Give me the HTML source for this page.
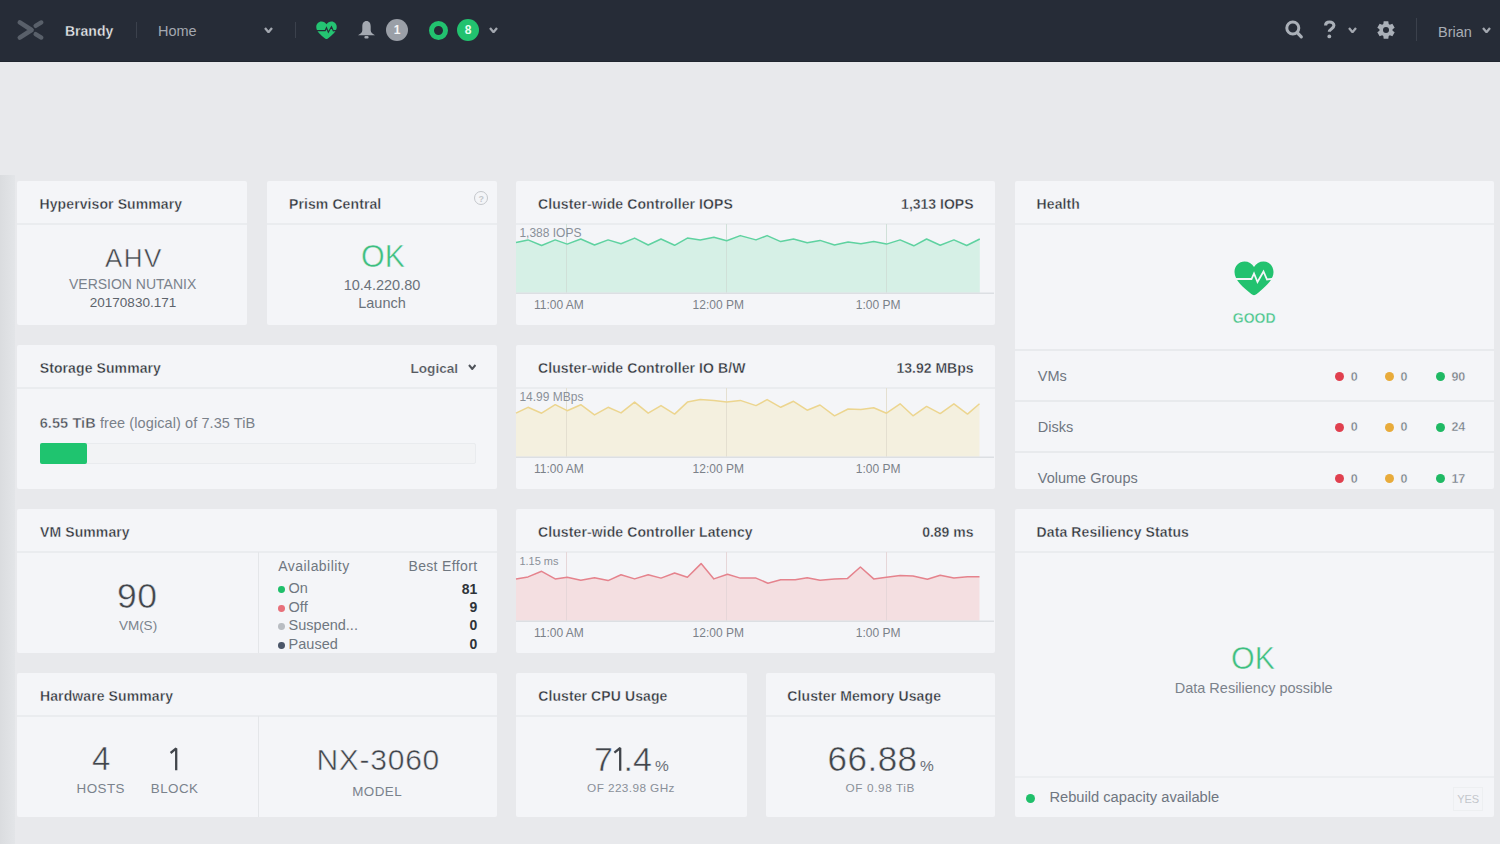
<!DOCTYPE html>
<html><head><meta charset="utf-8"><title>Prism Dashboard</title>
<style>
html,body{margin:0;padding:0;width:1500px;height:844px;overflow:hidden;background:#e8e9ec;}
body{position:relative;font-family:"Liberation Sans",sans-serif;}
.t{position:absolute;white-space:nowrap;}
.r{position:absolute;}
</style></head><body>
<div id="root" style="position:absolute;left:0;top:0;width:1500px;height:844px">
<div class="r" style="left:0px;top:0px;width:1500px;height:62px;background:#262c37;"></div>
<div class="r" style="left:0px;top:61px;width:1500px;height:1px;background:#20252e;"></div>
<svg class="r" style="left:0;top:0" width="60" height="60" viewBox="0 0 60 60">
<path d="M19.8 22.4 L31.6 30 L19.8 37.6" fill="none" stroke="#59606a" stroke-width="4.6" stroke-linecap="round" stroke-linejoin="round"/>
<path d="M41.3 22.4 L35.6 25.9" fill="none" stroke="#59606a" stroke-width="4.3" stroke-linecap="round"/>
<path d="M35.6 34.1 L41.3 37.6" fill="none" stroke="#59606a" stroke-width="4.3" stroke-linecap="round"/>
</svg>
<div class="t" style="left:65.0px;top:24.1px;font-size:14px;line-height:14px;color:#e9eaec;font-weight:700;letter-spacing:0px;-webkit-text-stroke:0.3px #262c37;">Brandy</div>
<div class="r" style="left:136px;top:22px;width:1px;height:16px;background:#3b414c;"></div>
<div class="t" style="left:158.0px;top:23.7px;font-size:14.5px;line-height:14.5px;color:#a3a8b0;font-weight:400;letter-spacing:0px;">Home</div>
<svg class="r" style="left:264px;top:27px" width="9" height="6.2" viewBox="0 0 9 6.2"><path d="M1 1 L4.5 5.2 L8 1" fill="none" stroke="#a3a8b0" stroke-width="2.3"/></svg>
<div class="r" style="left:295px;top:22px;width:1px;height:16px;background:#3b414c;"></div>
<svg class="r" style="left:316.3px;top:20.5px" width="21" height="18.7" viewBox="0 0 40 35">
<path d="M20 6 C18 2.5 14.5 0.5 10.5 0.5 C5 0.5 0.5 5 0.5 11 C0.5 19.5 9.5 26.5 17.3 33.1 C19 34.5 21 34.5 22.7 33.1 C30.5 26.5 39.5 19.5 39.5 11 C39.5 5 35 0.5 29.5 0.5 C25.5 0.5 22 2.5 20 6 Z" fill="#24c472"/>
<path d="M0 18 L17.5 18 L20 12.5 L23.5 21 L29.5 10.5 L33 18.5 L40 17.5" fill="none" stroke="#262c37" stroke-width="2.2" stroke-linejoin="miter"/>
</svg>
<svg class="r" style="left:357px;top:20px" width="19" height="20" viewBox="0 0 19 20">
<path d="M9.5 1 C6.8 1 5.3 3.2 5.3 6.6 L5.3 10.4 C5.3 12.4 3 13.9 1 15.3 L18 15.3 C16 13.9 13.7 12.4 13.7 10.4 L13.7 6.6 C13.7 3.2 12.2 1 9.5 1 Z" fill="#a3a8b0"/>
<rect x="7.4" y="16.1" width="4.2" height="2.4" rx="1.1" fill="#a3a8b0"/>
</svg>
<div class="r" style="left:386px;top:19px;width:22px;height:22px;border-radius:50%;background:#9a9fa7"></div>
<div class="t" style="left:97.0px;width:600px;text-align:center;top:24.3px;font-size:12px;line-height:12px;color:#f4f4f4;font-weight:700;letter-spacing:0px;">1</div>
<div class="r" style="left:428.5px;top:20.5px;width:19px;height:19px;border-radius:50%;box-sizing:border-box;border:5px solid #22c26f"></div>
<div class="r" style="left:457px;top:19px;width:22px;height:22px;border-radius:50%;background:#22c26f"></div>
<div class="t" style="left:168.0px;width:600px;text-align:center;top:24.3px;font-size:12px;line-height:12px;color:#eafff2;font-weight:700;letter-spacing:0px;">8</div>
<svg class="r" style="left:488.5px;top:27px" width="9" height="6.2" viewBox="0 0 9 6.2"><path d="M1 1 L4.5 5.2 L8 1" fill="none" stroke="#a3a8b0" stroke-width="2.3"/></svg>
<svg class="r" style="left:1284px;top:20px" width="20" height="20" viewBox="0 0 20 20">
<circle cx="8.8" cy="8" r="6" fill="none" stroke="#aab0b8" stroke-width="3"/>
<path d="M13.2 12.6 L17.3 16.8" stroke="#aab0b8" stroke-width="3.2" stroke-linecap="round"/>
</svg>
<svg class="r" style="left:1322px;top:20px" width="16" height="20" viewBox="0 0 16 20">
<path d="M3.6 5.4 C3.6 2.8 5.5 2 7.5 2 C10 2 11.9 3.3 11.9 5.6 C11.9 8.5 7.3 8.8 7.3 11.8" fill="none" stroke="#aab0b8" stroke-width="3.1"/>
<circle cx="7.3" cy="16.4" r="1.9" fill="#aab0b8"/>
</svg>
<svg class="r" style="left:1347.5px;top:27px" width="9" height="6.2" viewBox="0 0 9 6.2"><path d="M1 1 L4.5 5.2 L8 1" fill="none" stroke="#a3a8b0" stroke-width="2.3"/></svg>
<svg class="r" style="left:1376px;top:19.5px" width="20" height="20" viewBox="0 0 20 20"><path d="M7.69 1.30 L12.31 1.30 L12.69 3.97 L13.87 4.66 L16.38 3.65 L18.69 7.65 L16.56 9.32 L16.56 10.68 L18.69 12.35 L16.38 16.35 L13.87 15.34 L12.69 16.03 L12.31 18.70 L7.69 18.70 L7.31 16.03 L6.13 15.34 L3.62 16.35 L1.31 12.35 L3.44 10.68 L3.44 9.32 L1.31 7.65 L3.62 3.65 L6.13 4.66 L7.31 3.97 Z" fill="#aab0b8"/><circle cx="10" cy="10" r="3" fill="#262c37"/></svg>
<div class="r" style="left:1416px;top:18px;width:1px;height:23px;background:#3b414c;"></div>
<div class="t" style="left:1438.0px;top:24.7px;font-size:14.5px;line-height:14.5px;color:#a9aeb5;font-weight:400;letter-spacing:0px;">Brian</div>
<svg class="r" style="left:1481.5px;top:27px" width="9" height="6.2" viewBox="0 0 9 6.2"><path d="M1 1 L4.5 5.2 L8 1" fill="none" stroke="#a3a8b0" stroke-width="2.3"/></svg>
<div class="r" style="left:0px;top:62px;width:1500px;height:782px;background:#e8e9ec;"></div>
<div class="r" style="left:0px;top:175px;width:15px;height:669px;background:linear-gradient(to right,#dadcdf,#e3e5e8);"></div>
<div class="r" style="left:17px;top:181px;width:230px;height:144px;background:#f4f5f8;border-radius:2px;"></div><div class="r" style="left:17px;top:223px;width:230px;height:2px;background:#eaecef;"></div><div class="t" style="left:39.5px;top:197.3px;font-size:14px;line-height:14px;color:#2e3238;font-weight:700;letter-spacing:0.1px;-webkit-text-stroke:0.35px #f4f5f8;">Hypervisor Summary</div>
<div class="t" style="left:105.0px;top:244.8px;font-size:26px;line-height:26px;color:#41454b;font-weight:400;letter-spacing:1.5px;-webkit-text-stroke:0.5px #f4f5f8;">AHV</div>
<div class="t" style="left:-167.4px;width:600px;text-align:center;top:276.9px;font-size:14px;line-height:14px;color:#7a828c;font-weight:400;letter-spacing:0px;">VERSION NUTANIX</div>
<div class="t" style="left:-167.0px;width:600px;text-align:center;top:295.9px;font-size:13.5px;line-height:13.5px;color:#5d636b;font-weight:400;letter-spacing:0px;">20170830.171</div>
<div class="r" style="left:267px;top:181px;width:230px;height:144px;background:#f4f5f8;border-radius:2px;"></div><div class="r" style="left:267px;top:223px;width:230px;height:2px;background:#eaecef;"></div><div class="t" style="left:289.0px;top:197.3px;font-size:14px;line-height:14px;color:#2e3238;font-weight:700;letter-spacing:0.1px;-webkit-text-stroke:0.35px #f4f5f8;">Prism Central</div>
<div class="r" style="left:474.3px;top:191.4px;width:14px;height:14px;border-radius:50%;box-sizing:border-box;border:1.8px solid #c4c7cb"></div>
<div class="t" style="left:181.3px;width:600px;text-align:center;top:194.7px;font-size:9px;line-height:9px;color:#c4c7cb;font-weight:700;letter-spacing:0px;">?</div>
<div class="t" style="left:360.5px;top:239.9px;font-size:32px;line-height:32px;color:#3ebf80;font-weight:400;letter-spacing:0px;-webkit-text-stroke:0.5px #f4f5f8;transform:scaleX(0.95);transform-origin:0 0;">OK</div>
<div class="t" style="left:82.0px;width:600px;text-align:center;top:277.7px;font-size:14.5px;line-height:14.5px;color:#6b727b;font-weight:400;letter-spacing:0px;">10.4.220.80</div>
<div class="t" style="left:82.0px;width:600px;text-align:center;top:295.7px;font-size:14.5px;line-height:14.5px;color:#6b727b;font-weight:400;letter-spacing:0px;">Launch</div>
<div class="r" style="left:516px;top:181px;width:479px;height:144px;background:#f4f5f8;border-radius:2px;"></div><div class="r" style="left:516px;top:223px;width:479px;height:2px;background:#eaecef;"></div><div class="t" style="left:538.0px;top:197.3px;font-size:14px;line-height:14px;color:#2e3238;font-weight:700;letter-spacing:0.1px;-webkit-text-stroke:0.35px #f4f5f8;">Cluster-wide Controller IOPS</div><div class="t" style="right:526.5px;top:197.3px;font-size:14px;line-height:14px;color:#2e3238;font-weight:700;letter-spacing:0px;-webkit-text-stroke:0.35px #f4f5f8;">1,313 IOPS</div><svg class="r" style="left:0;top:0" width="1500" height="844" viewBox="0 0 1500 844"><path d="M516 292.7 L516.0 242.4 L528.0 239.9 L541.6 245.5 L555.2 239.9 L567.2 244.1 L580.8 239.0 L594.5 245.0 L608.1 239.9 L621.0 243.8 L634.6 238.1 L648.2 245.0 L661.0 239.0 L674.6 245.3 L687.4 238.1 L700.2 239.9 L713.9 237.3 L726.7 240.7 L740.3 235.6 L756.0 239.9 L767.1 235.6 L780.7 241.6 L793.5 239.0 L807.2 242.8 L820.0 240.4 L834.5 245.0 L848.1 241.9 L860.9 243.8 L873.7 241.6 L886.5 244.1 L900.1 239.9 L913.8 245.8 L926.6 239.0 L940.2 245.3 L953.9 239.9 L966.7 245.5 L979.8 239.0 L979.8 292.7 Z" fill="#d6f0e6"/><line x1="566.5" y1="224" x2="566.5" y2="292.7" stroke="#d0e0d8" stroke-width="1"/><line x1="726.5" y1="224" x2="726.5" y2="292.7" stroke="#d0e0d8" stroke-width="1"/><line x1="886.5" y1="224" x2="886.5" y2="292.7" stroke="#d0e0d8" stroke-width="1"/><path d="M516.0 242.4 L528.0 239.9 L541.6 245.5 L555.2 239.9 L567.2 244.1 L580.8 239.0 L594.5 245.0 L608.1 239.9 L621.0 243.8 L634.6 238.1 L648.2 245.0 L661.0 239.0 L674.6 245.3 L687.4 238.1 L700.2 239.9 L713.9 237.3 L726.7 240.7 L740.3 235.6 L756.0 239.9 L767.1 235.6 L780.7 241.6 L793.5 239.0 L807.2 242.8 L820.0 240.4 L834.5 245.0 L848.1 241.9 L860.9 243.8 L873.7 241.6 L886.5 244.1 L900.1 239.9 L913.8 245.8 L926.6 239.0 L940.2 245.3 L953.9 239.9 L966.7 245.5 L979.8 239.0" fill="none" stroke="#5fd2a0" stroke-width="1.5" stroke-linejoin="round"/><line x1="516" y1="293.2" x2="994" y2="293.2" stroke="#dcdfe3" stroke-width="1.5"/></svg><div class="t" style="left:519.4px;top:227.1px;font-size:12px;line-height:12px;color:#8a9098;font-weight:400;letter-spacing:0px;">1,388 IOPS</div><div class="t" style="left:534.0px;top:298.8px;font-size:12px;line-height:12px;color:#7b8189;font-weight:400;letter-spacing:0px;">11:00 AM</div><div class="t" style="left:692.6px;top:298.8px;font-size:12px;line-height:12px;color:#7b8189;font-weight:400;letter-spacing:0px;">12:00 PM</div><div class="t" style="left:855.8px;top:298.8px;font-size:12px;line-height:12px;color:#7b8189;font-weight:400;letter-spacing:0px;">1:00 PM</div>
<div class="r" style="left:1015px;top:181px;width:479px;height:308px;background:#f4f5f8;border-radius:2px;"></div><div class="r" style="left:1015px;top:223px;width:479px;height:2px;background:#eaecef;"></div><div class="t" style="left:1036.6px;top:197.3px;font-size:14px;line-height:14px;color:#2e3238;font-weight:700;letter-spacing:0.1px;-webkit-text-stroke:0.35px #f4f5f8;">Health</div>
<svg class="r" style="left:1234.2px;top:261px" width="40" height="35" viewBox="0 0 40 35">
<path d="M20 6 C18 2.5 14.5 0.5 10.5 0.5 C5 0.5 0.5 5 0.5 11 C0.5 19.5 9.5 26.5 17.3 33.1 C19 34.5 21 34.5 22.7 33.1 C30.5 26.5 39.5 19.5 39.5 11 C39.5 5 35 0.5 29.5 0.5 C25.5 0.5 22 2.5 20 6 Z" fill="#22c26f"/>
<path d="M0 18 L17.5 18 L20 12.5 L23.5 21 L29.5 10.5 L33 18.5 L40 17.5" fill="none" stroke="#f4f5f8" stroke-width="1.8" stroke-linejoin="miter"/>
</svg>
<div class="t" style="left:954.2px;width:600px;text-align:center;top:311.1px;font-size:14px;line-height:14px;color:#43c487;font-weight:700;letter-spacing:0px;-webkit-text-stroke:0.4px #f4f5f8;">GOOD</div>
<div class="r" style="left:1015px;top:349px;width:479px;height:2px;background:#e8eaed;"></div>
<div class="r" style="left:1015px;top:400px;width:479px;height:2px;background:#e8eaed;"></div>
<div class="r" style="left:1015px;top:451px;width:479px;height:2px;background:#e8eaed;"></div>
<div class="t" style="left:1037.8px;top:368.9px;font-size:14.5px;line-height:14.5px;color:#6f7680;font-weight:400;letter-spacing:0px;">VMs</div>
<div class="r" style="left:1335.4px;top:372.1px;width:9px;height:9px;border-radius:50%;background:#e0404f"></div>
<div class="t" style="left:1350.7px;top:370.6px;font-size:12.5px;line-height:12.5px;color:#6e757e;font-weight:700;letter-spacing:0px;-webkit-text-stroke:0.4px #f4f5f8;">0</div>
<div class="r" style="left:1385.2px;top:372.1px;width:9px;height:9px;border-radius:50%;background:#e8ab3b"></div>
<div class="t" style="left:1400.5px;top:370.6px;font-size:12.5px;line-height:12.5px;color:#6e757e;font-weight:700;letter-spacing:0px;-webkit-text-stroke:0.4px #f4f5f8;">0</div>
<div class="r" style="left:1436.1px;top:372.1px;width:9px;height:9px;border-radius:50%;background:#1fb964"></div>
<div class="t" style="left:1451.4px;top:370.6px;font-size:12.5px;line-height:12.5px;color:#6e757e;font-weight:700;letter-spacing:0px;-webkit-text-stroke:0.4px #f4f5f8;">90</div>
<div class="t" style="left:1037.8px;top:419.7px;font-size:14.5px;line-height:14.5px;color:#6f7680;font-weight:400;letter-spacing:0px;">Disks</div>
<div class="r" style="left:1335.4px;top:422.9px;width:9px;height:9px;border-radius:50%;background:#e0404f"></div>
<div class="t" style="left:1350.7px;top:421.4px;font-size:12.5px;line-height:12.5px;color:#6e757e;font-weight:700;letter-spacing:0px;-webkit-text-stroke:0.4px #f4f5f8;">0</div>
<div class="r" style="left:1385.2px;top:422.9px;width:9px;height:9px;border-radius:50%;background:#e8ab3b"></div>
<div class="t" style="left:1400.5px;top:421.4px;font-size:12.5px;line-height:12.5px;color:#6e757e;font-weight:700;letter-spacing:0px;-webkit-text-stroke:0.4px #f4f5f8;">0</div>
<div class="r" style="left:1436.1px;top:422.9px;width:9px;height:9px;border-radius:50%;background:#1fb964"></div>
<div class="t" style="left:1451.4px;top:421.4px;font-size:12.5px;line-height:12.5px;color:#6e757e;font-weight:700;letter-spacing:0px;-webkit-text-stroke:0.4px #f4f5f8;">24</div>
<div class="t" style="left:1037.8px;top:470.8px;font-size:14.5px;line-height:14.5px;color:#6f7680;font-weight:400;letter-spacing:0px;">Volume Groups</div>
<div class="r" style="left:1335.4px;top:474.0px;width:9px;height:9px;border-radius:50%;background:#e0404f"></div>
<div class="t" style="left:1350.7px;top:472.5px;font-size:12.5px;line-height:12.5px;color:#6e757e;font-weight:700;letter-spacing:0px;-webkit-text-stroke:0.4px #f4f5f8;">0</div>
<div class="r" style="left:1385.2px;top:474.0px;width:9px;height:9px;border-radius:50%;background:#e8ab3b"></div>
<div class="t" style="left:1400.5px;top:472.5px;font-size:12.5px;line-height:12.5px;color:#6e757e;font-weight:700;letter-spacing:0px;-webkit-text-stroke:0.4px #f4f5f8;">0</div>
<div class="r" style="left:1436.1px;top:474.0px;width:9px;height:9px;border-radius:50%;background:#1fb964"></div>
<div class="t" style="left:1451.4px;top:472.5px;font-size:12.5px;line-height:12.5px;color:#6e757e;font-weight:700;letter-spacing:0px;-webkit-text-stroke:0.4px #f4f5f8;">17</div>
<div class="r" style="left:17px;top:345px;width:480px;height:144px;background:#f4f5f8;border-radius:2px;"></div><div class="r" style="left:17px;top:387px;width:480px;height:2px;background:#eaecef;"></div><div class="t" style="left:39.7px;top:361.3px;font-size:14px;line-height:14px;color:#2e3238;font-weight:700;letter-spacing:0.1px;-webkit-text-stroke:0.35px #f4f5f8;">Storage Summary</div>
<div class="t" style="left:410.5px;top:361.6px;font-size:13.6px;line-height:13.6px;color:#55595f;font-weight:700;letter-spacing:0px;-webkit-text-stroke:0.2px #f4f5f8;">Logical</div>
<svg class="r" style="left:467.5px;top:363.5px" width="8.5" height="6" viewBox="0 0 8.5 6"><path d="M1 1 L4.25 5 L7.5 1" fill="none" stroke="#4f535a" stroke-width="2"/></svg>
<div class="t" style="left:39.7px;top:416.3px;font-size:14.5px;line-height:14.5px;color:#7a818a;font-weight:400;letter-spacing:0.09px;"><span style="color:#4a4f56;font-weight:700;-webkit-text-stroke:0.4px #f4f5f8">6.55 TiB</span> free (logical) of 7.35 TiB</div>
<div class="r" style="left:39.5px;top:443px;width:436.0px;height:21px;background:#f2f3f5;box-sizing:border-box;border:1px solid #e9ebee;border-radius:2px;"></div>
<div class="r" style="left:39.5px;top:442.6px;width:47.5px;height:21.799999999999955px;background:#1fc46f;border-radius:2px;"></div>
<div class="r" style="left:516px;top:345px;width:479px;height:144px;background:#f4f5f8;border-radius:2px;"></div><div class="r" style="left:516px;top:387px;width:479px;height:2px;background:#eaecef;"></div><div class="t" style="left:538.0px;top:361.3px;font-size:14px;line-height:14px;color:#2e3238;font-weight:700;letter-spacing:0.1px;-webkit-text-stroke:0.35px #f4f5f8;">Cluster-wide Controller IO B/W</div><div class="t" style="right:526.5px;top:361.3px;font-size:14px;line-height:14px;color:#2e3238;font-weight:700;letter-spacing:0px;-webkit-text-stroke:0.35px #f4f5f8;">13.92 MBps</div><svg class="r" style="left:0;top:0" width="1500" height="844" viewBox="0 0 1500 844"><path d="M516 456.7 L516.0 413.2 L528.0 407.3 L541.6 413.2 L555.2 404.7 L567.2 410.7 L580.8 404.7 L594.5 414.9 L608.1 407.3 L621.0 412.9 L634.6 402.1 L648.2 413.2 L661.0 405.6 L674.6 414.1 L687.4 402.1 L700.2 399.6 L713.9 400.4 L726.7 402.1 L740.3 400.4 L756.0 405.6 L767.1 399.6 L780.7 407.3 L793.5 401.3 L807.2 410.2 L820.0 405.0 L834.5 415.8 L848.1 409.0 L860.9 409.5 L873.7 407.8 L886.5 413.2 L900.1 403.8 L913.0 415.8 L926.6 406.4 L940.2 413.6 L953.9 403.8 L967.5 414.1 L979.5 403.8 L979.5 456.7 Z" fill="#f4f0df"/><line x1="566.5" y1="388" x2="566.5" y2="456.7" stroke="#e4dfd0" stroke-width="1"/><line x1="726.5" y1="388" x2="726.5" y2="456.7" stroke="#e4dfd0" stroke-width="1"/><line x1="886.5" y1="388" x2="886.5" y2="456.7" stroke="#e4dfd0" stroke-width="1"/><path d="M516.0 413.2 L528.0 407.3 L541.6 413.2 L555.2 404.7 L567.2 410.7 L580.8 404.7 L594.5 414.9 L608.1 407.3 L621.0 412.9 L634.6 402.1 L648.2 413.2 L661.0 405.6 L674.6 414.1 L687.4 402.1 L700.2 399.6 L713.9 400.4 L726.7 402.1 L740.3 400.4 L756.0 405.6 L767.1 399.6 L780.7 407.3 L793.5 401.3 L807.2 410.2 L820.0 405.0 L834.5 415.8 L848.1 409.0 L860.9 409.5 L873.7 407.8 L886.5 413.2 L900.1 403.8 L913.0 415.8 L926.6 406.4 L940.2 413.6 L953.9 403.8 L967.5 414.1 L979.5 403.8" fill="none" stroke="#ecd58f" stroke-width="1.5" stroke-linejoin="round"/><line x1="516" y1="457.2" x2="994" y2="457.2" stroke="#dcdfe3" stroke-width="1.5"/></svg><div class="t" style="left:519.4px;top:391.1px;font-size:12px;line-height:12px;color:#8a9098;font-weight:400;letter-spacing:0px;">14.99 MBps</div><div class="t" style="left:534.0px;top:462.8px;font-size:12px;line-height:12px;color:#7b8189;font-weight:400;letter-spacing:0px;">11:00 AM</div><div class="t" style="left:692.6px;top:462.8px;font-size:12px;line-height:12px;color:#7b8189;font-weight:400;letter-spacing:0px;">12:00 PM</div><div class="t" style="left:855.8px;top:462.8px;font-size:12px;line-height:12px;color:#7b8189;font-weight:400;letter-spacing:0px;">1:00 PM</div>
<div class="r" style="left:17px;top:509px;width:480px;height:144px;background:#f4f5f8;border-radius:2px;"></div><div class="r" style="left:17px;top:551px;width:480px;height:2px;background:#eaecef;"></div><div class="t" style="left:40.0px;top:525.3px;font-size:14px;line-height:14px;color:#2e3238;font-weight:700;letter-spacing:0.1px;-webkit-text-stroke:0.35px #f4f5f8;">VM Summary</div>
<div class="r" style="left:258px;top:552px;width:1px;height:101px;background:#e4e6e9;"></div>
<div class="t" style="left:116.9px;top:578.5px;font-size:35.5px;line-height:35.5px;color:#41454b;font-weight:400;letter-spacing:0.6px;-webkit-text-stroke:0.5px #f4f5f8;">90</div>
<div class="t" style="left:-162.0px;width:600px;text-align:center;top:619.1px;font-size:13.5px;line-height:13.5px;color:#7a828c;font-weight:400;letter-spacing:0px;">VM(S)</div>
<div class="t" style="left:278.3px;top:558.5px;font-size:14px;line-height:14px;color:#6f7780;font-weight:400;letter-spacing:0.45px;">Availability</div>
<div class="t" style="right:1022.6px;top:558.5px;font-size:14px;line-height:14px;color:#6f7780;font-weight:400;letter-spacing:0.35px;">Best Effort</div>
<div class="r" style="left:278.0px;top:586.4px;width:6.8px;height:6.8px;border-radius:50%;background:#1fbf6a"></div>
<div class="t" style="left:288.6px;top:581.1px;font-size:14.5px;line-height:14.5px;color:#6f7780;font-weight:400;letter-spacing:0px;">On</div>
<div class="t" style="right:1022.6px;top:581.5px;font-size:14px;line-height:14px;color:#2f3338;font-weight:700;letter-spacing:0px;">81</div>
<div class="r" style="left:278.0px;top:605.2px;width:6.8px;height:6.8px;border-radius:50%;background:#e8707a"></div>
<div class="t" style="left:288.6px;top:599.9px;font-size:14.5px;line-height:14.5px;color:#6f7780;font-weight:400;letter-spacing:0px;">Off</div>
<div class="t" style="right:1022.6px;top:600.3px;font-size:14px;line-height:14px;color:#2f3338;font-weight:700;letter-spacing:0px;">9</div>
<div class="r" style="left:278.0px;top:623.1px;width:6.8px;height:6.8px;border-radius:50%;background:#b9bdc2"></div>
<div class="t" style="left:288.6px;top:617.8px;font-size:14.5px;line-height:14.5px;color:#6f7780;font-weight:400;letter-spacing:0px;">Suspend...</div>
<div class="t" style="right:1022.6px;top:618.2px;font-size:14px;line-height:14px;color:#2f3338;font-weight:700;letter-spacing:0px;">0</div>
<div class="r" style="left:278.0px;top:641.9px;width:6.8px;height:6.8px;border-radius:50%;background:#4b5668"></div>
<div class="t" style="left:288.6px;top:636.6px;font-size:14.5px;line-height:14.5px;color:#6f7780;font-weight:400;letter-spacing:0px;">Paused</div>
<div class="t" style="right:1022.6px;top:637.0px;font-size:14px;line-height:14px;color:#2f3338;font-weight:700;letter-spacing:0px;">0</div>
<div class="r" style="left:516px;top:509px;width:479px;height:144px;background:#f4f5f8;border-radius:2px;"></div><div class="r" style="left:516px;top:551px;width:479px;height:2px;background:#eaecef;"></div><div class="t" style="left:538.0px;top:525.3px;font-size:14px;line-height:14px;color:#2e3238;font-weight:700;letter-spacing:0.1px;-webkit-text-stroke:0.35px #f4f5f8;">Cluster-wide Controller Latency</div><div class="t" style="right:526.5px;top:525.3px;font-size:14px;line-height:14px;color:#2e3238;font-weight:700;letter-spacing:0px;-webkit-text-stroke:0.35px #f4f5f8;">0.89 ms</div><svg class="r" style="left:0;top:0" width="1500" height="844" viewBox="0 0 1500 844"><path d="M516 620.7 L516.0 578.9 L528.0 576.9 L541.6 571.3 L555.2 578.9 L567.2 577.2 L580.8 580.3 L594.5 577.7 L608.1 580.6 L621.0 574.7 L634.6 578.9 L648.2 574.7 L661.0 578.1 L674.6 573.0 L687.4 577.2 L701.1 563.6 L713.9 578.9 L727.5 574.3 L740.3 578.1 L756.0 578.1 L767.9 583.2 L780.7 579.8 L795.2 579.8 L807.2 577.7 L820.0 580.3 L834.5 578.9 L847.3 578.6 L860.4 567.0 L873.7 578.9 L886.5 577.2 L900.1 575.5 L913.0 575.9 L927.4 579.3 L940.2 575.2 L953.9 578.1 L967.5 576.7 L979.5 576.7 L979.5 620.7 Z" fill="#f4dfe1"/><line x1="566.5" y1="552" x2="566.5" y2="620.7" stroke="#e6d6d8" stroke-width="1"/><line x1="726.5" y1="552" x2="726.5" y2="620.7" stroke="#e6d6d8" stroke-width="1"/><line x1="886.5" y1="552" x2="886.5" y2="620.7" stroke="#e6d6d8" stroke-width="1"/><path d="M516.0 578.9 L528.0 576.9 L541.6 571.3 L555.2 578.9 L567.2 577.2 L580.8 580.3 L594.5 577.7 L608.1 580.6 L621.0 574.7 L634.6 578.9 L648.2 574.7 L661.0 578.1 L674.6 573.0 L687.4 577.2 L701.1 563.6 L713.9 578.9 L727.5 574.3 L740.3 578.1 L756.0 578.1 L767.9 583.2 L780.7 579.8 L795.2 579.8 L807.2 577.7 L820.0 580.3 L834.5 578.9 L847.3 578.6 L860.4 567.0 L873.7 578.9 L886.5 577.2 L900.1 575.5 L913.0 575.9 L927.4 579.3 L940.2 575.2 L953.9 578.1 L967.5 576.7 L979.5 576.7" fill="none" stroke="#e5838d" stroke-width="1.5" stroke-linejoin="round"/><line x1="516" y1="621.2" x2="994" y2="621.2" stroke="#dcdfe3" stroke-width="1.5"/></svg><div class="t" style="left:519.4px;top:556.0px;font-size:11px;line-height:11px;color:#8a9098;font-weight:400;letter-spacing:0px;">1.15 ms</div><div class="t" style="left:534.0px;top:626.8px;font-size:12px;line-height:12px;color:#7b8189;font-weight:400;letter-spacing:0px;">11:00 AM</div><div class="t" style="left:692.6px;top:626.8px;font-size:12px;line-height:12px;color:#7b8189;font-weight:400;letter-spacing:0px;">12:00 PM</div><div class="t" style="left:855.8px;top:626.8px;font-size:12px;line-height:12px;color:#7b8189;font-weight:400;letter-spacing:0px;">1:00 PM</div>
<div class="r" style="left:1015px;top:509px;width:479px;height:308px;background:#f4f5f8;border-radius:2px;"></div><div class="r" style="left:1015px;top:551px;width:479px;height:2px;background:#eaecef;"></div><div class="t" style="left:1036.6px;top:525.3px;font-size:14px;line-height:14px;color:#2e3238;font-weight:700;letter-spacing:0.1px;-webkit-text-stroke:0.35px #f4f5f8;">Data Resiliency Status</div>
<div class="t" style="left:1231.3px;top:642.2px;font-size:32px;line-height:32px;color:#3ebf80;font-weight:400;letter-spacing:0px;-webkit-text-stroke:0.5px #f4f5f8;transform:scaleX(0.95);transform-origin:0 0;">OK</div>
<div class="t" style="left:953.7px;width:600px;text-align:center;top:680.7px;font-size:14.5px;line-height:14.5px;color:#7b828b;font-weight:400;letter-spacing:0px;">Data Resiliency possible</div>
<div class="r" style="left:1015px;top:776px;width:479px;height:2px;background:#eceef1;"></div>
<div class="r" style="left:1025.5px;top:793.9px;width:9px;height:9px;border-radius:50%;background:#1fbf6a"></div>
<div class="t" style="left:1049.4px;top:790.1px;font-size:14.7px;line-height:14.7px;color:#6f7680;font-weight:400;letter-spacing:0px;">Rebuild capacity available</div>
<div class="r" style="left:1453px;top:787px;width:30px;height:23.5px;background:transparent;box-sizing:border-box;border:1px solid #edeff1;"></div>
<div class="t" style="left:1168.2px;width:600px;text-align:center;top:794.1px;font-size:11px;line-height:11px;color:#c3c6cb;font-weight:400;letter-spacing:0px;">YES</div>
<div class="r" style="left:17px;top:673px;width:480px;height:144px;background:#f4f5f8;border-radius:2px;"></div><div class="r" style="left:17px;top:715px;width:480px;height:2px;background:#eaecef;"></div><div class="t" style="left:40.0px;top:689.3px;font-size:14px;line-height:14px;color:#2e3238;font-weight:700;letter-spacing:0.1px;-webkit-text-stroke:0.35px #f4f5f8;">Hardware Summary</div>
<div class="r" style="left:258px;top:716px;width:1px;height:101px;background:#e4e6e9;"></div>
<div class="t" style="left:92.0px;top:742.3px;font-size:33px;line-height:33px;color:#41454b;font-weight:400;letter-spacing:0px;-webkit-text-stroke:0.5px #f4f5f8;">4</div>
<svg class="r" style="left:0;top:0" width="1500" height="844" viewBox="0 0 1500 844"><path d="M170.6 753.0 L176.2 748.4 L176.2 770.3" fill="none" stroke="#41454b" stroke-width="2.3" stroke-linejoin="miter" stroke-miterlimit="2"/></svg>
<div class="t" style="left:-199.2px;width:600px;text-align:center;top:782.0px;font-size:13.4px;line-height:13.4px;color:#7a828c;font-weight:400;letter-spacing:0.45px;">HOSTS</div>
<div class="t" style="left:-125.4px;width:600px;text-align:center;top:782.0px;font-size:13.4px;line-height:13.4px;color:#7a828c;font-weight:400;letter-spacing:0.45px;">BLOCK</div>
<div class="t" style="left:316.4px;top:744.6px;font-size:30px;line-height:30px;color:#41454b;font-weight:400;letter-spacing:0.75px;-webkit-text-stroke:0.5px #f4f5f8;">NX-3060</div>
<div class="t" style="left:77.2px;width:600px;text-align:center;top:785.4px;font-size:13.4px;line-height:13.4px;color:#7a828c;font-weight:400;letter-spacing:0.45px;">MODEL</div>
<div class="r" style="left:516px;top:673px;width:231px;height:144px;background:#f4f5f8;border-radius:2px;"></div><div class="r" style="left:516px;top:715px;width:231px;height:2px;background:#eaecef;"></div><div class="t" style="left:538.2px;top:689.3px;font-size:14px;line-height:14px;color:#2e3238;font-weight:700;letter-spacing:0.1px;-webkit-text-stroke:0.35px #f4f5f8;">Cluster CPU Usage</div>
<div class="t" style="left:594.1px;top:741.9px;font-size:34px;line-height:34px;color:#41454b;font-weight:400;letter-spacing:0px;-webkit-text-stroke:0.5px #f4f5f8;">7</div>
<svg class="r" style="left:0;top:0" width="1500" height="844" viewBox="0 0 1500 844"><path d="M614.4 752.6 L620.2 748.0 L620.2 770.7" fill="none" stroke="#41454b" stroke-width="2.3" stroke-linejoin="miter" stroke-miterlimit="2"/></svg>
<div class="t" style="left:623.5px;top:741.9px;font-size:34px;line-height:34px;color:#41454b;font-weight:400;letter-spacing:0px;-webkit-text-stroke:0.5px #f4f5f8;">.</div>
<div class="t" style="left:633.1px;top:741.9px;font-size:34px;line-height:34px;color:#41454b;font-weight:400;letter-spacing:0px;-webkit-text-stroke:0.5px #f4f5f8;">4</div>
<div class="t" style="left:655.0px;top:757.6px;font-size:15.5px;line-height:15.5px;color:#6a6f77;font-weight:400;letter-spacing:0px;">%</div>
<div class="t" style="left:331.0px;width:600px;text-align:center;top:783.2px;font-size:11.8px;line-height:11.8px;color:#8a9099;font-weight:400;letter-spacing:0.4px;">OF 223.98 GHz</div>
<div class="r" style="left:766px;top:673px;width:229px;height:144px;background:#f4f5f8;border-radius:2px;"></div><div class="r" style="left:766px;top:715px;width:229px;height:2px;background:#eaecef;"></div><div class="t" style="left:787.3px;top:689.3px;font-size:14px;line-height:14px;color:#2e3238;font-weight:700;letter-spacing:0.1px;-webkit-text-stroke:0.35px #f4f5f8;">Cluster Memory Usage</div>
<div class="t" style="left:827.5px;top:741.2px;font-size:35px;line-height:35px;color:#41454b;font-weight:400;letter-spacing:0.5px;-webkit-text-stroke:0.5px #f4f5f8;">66.88</div>
<div class="t" style="left:920.0px;top:757.6px;font-size:15.5px;line-height:15.5px;color:#6a6f77;font-weight:400;letter-spacing:0px;">%</div>
<div class="t" style="left:580.3px;width:600px;text-align:center;top:783.2px;font-size:11.8px;line-height:11.8px;color:#8a9099;font-weight:400;letter-spacing:0.6px;">OF 0.98 TiB</div>
</div>
</body></html>
